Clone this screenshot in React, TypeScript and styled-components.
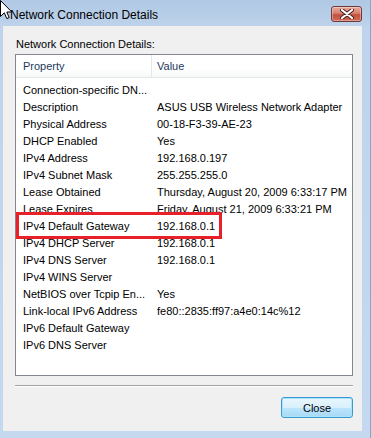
import styled, { createGlobalStyle } from 'styled-components'

const rows: [string, string][] = [
    ['Connection-specific DN...', ''],
    ['Description', 'ASUS USB Wireless Network Adapter'],
    ['Physical Address', '00-18-F3-39-AE-23'],
    ['DHCP Enabled', 'Yes'],
    ['IPv4 Address', '192.168.0.197'],
    ['IPv4 Subnet Mask', '255.255.255.0'],
    ['Lease Obtained', 'Thursday, August 20, 2009 6:33:17 PM'],
    ['Lease Expires', 'Friday, August 21, 2009 6:33:21 PM'],
    ['IPv4 Default Gateway', '192.168.0.1'],
    ['IPv4 DHCP Server', '192.168.0.1'],
    ['IPv4 DNS Server', '192.168.0.1'],
    ['IPv4 WINS Server', ''],
    ['NetBIOS over Tcpip En...', 'Yes'],
    ['Link-local IPv6 Address', 'fe80::2835:ff97:a4e0:14c%12'],
    ['IPv6 Default Gateway', ''],
    ['IPv6 DNS Server', ''],
]

const HIGHLIGHT = 'IPv4 Default Gateway'

const App = () => {
    return (
        <>
            <GlobalStyle />
            <StyledWindow>
                <Cursor width="13" height="20" viewBox="0 0 13 20">
                    <path d="M0.5 0.5 L0.5 16.5 L4.3 12.8 L6.8 18.6 L9.2 17.6 L6.8 12 L11.8 12 Z" fill="#fff" stroke="#000" strokeWidth="1" strokeLinejoin="round" />
                </Cursor>
                <TitleBar>
                    <TitleText>Network Connection Details</TitleText>
                    <CloseX aria-label="close">
                        <svg width="14" height="10" viewBox="0 0 14 10">
                            <path d="M2 1 L12 9 M12 1 L2 9" stroke="#4a2020" strokeWidth="4" strokeLinecap="round" />
                            <path d="M2 1 L12 9 M12 1 L2 9" stroke="#fff" strokeWidth="2.2" strokeLinecap="round" />
                        </svg>
                    </CloseX>
                </TitleBar>
                <Client>
                    <Label>Network Connection Details:</Label>
                    <ListBox>
                        <HeaderRow>
                            <HeaderCell $first>Property</HeaderCell>
                            <HeaderCell>Value</HeaderCell>
                        </HeaderRow>
                        <Rows>
                            {rows.map(([prop, val]) => (
                                <Row key={prop}>
                                    <Cell $first>{prop}</Cell>
                                    <Cell>{val}</Cell>
                                    {prop === HIGHLIGHT && <Highlight />}
                                </Row>
                            ))}
                        </Rows>
                    </ListBox>
                    <Separator />
                    <Footer>
                        <Button>Close</Button>
                    </Footer>
                </Client>
            </StyledWindow>
        </>
    )
}

export default App

const GlobalStyle = createGlobalStyle`
html, body { margin: 0; padding: 0; }
body {
  font-family: "Liberation Sans", Arial, sans-serif;
  font-size: 11px;
  color: #000;
  background: #c2d7ee;
}
`

const StyledWindow = styled.div`
position: relative;
width: 371px;
height: 438px;
display: flex;
flex-direction: column;
box-sizing: border-box;
padding: 0 8px 7px 3px;
background: linear-gradient(#b0c8e4 0px, #bfd4ec 30px, #c4d8ef 100%);
border-right: 1px solid #7fa9d0;
overflow: hidden;
`

const Cursor = styled.svg`
position: absolute;
left: 0;
top: 0;
z-index: 5;
`

const TitleBar = styled.div`
height: 26px;
display: flex;
align-items: flex-start;
justify-content: space-between;
padding-left: 7px;
`

const TitleText = styled.span`
font-size: 12px;
line-height: 14px;
margin-top: 8px;
color: #000;
`

const CloseX = styled.div`
width: 31px;
height: 16px;
margin-top: 6px;
box-sizing: border-box;
border: 1px solid #6b3a3a;
border-radius: 3px;
background: linear-gradient(#e9a99c 0%, #d7806f 45%, #c4503f 55%, #cf6a55 100%);
box-shadow: inset 0 0 0 1px rgba(255, 255, 255, 0.35);
display: flex;
align-items: center;
justify-content: center;
`

const Client = styled.div`
flex: 1;
background: #f0f0f0;
display: flex;
flex-direction: column;
padding: 11px 9px 0 12px;
`

const Label = styled.div`
line-height: 14px;
padding-left: 1px;
margin-bottom: 3px;
`

const ListBox = styled.div`
height: 322px;
box-sizing: border-box;
background: #fff;
border: 1px solid #828790;
display: flex;
flex-direction: column;
`

const HeaderRow = styled.div`
display: grid;
grid-template-columns: 136px 1fr;
height: 22px;
border-bottom: 1px solid #e5e5e5;
background: linear-gradient(#ffffff, #ffffff 60%, #f7f8f9);
`

const HeaderCell = styled.div<{ $first?: boolean }>`
display: flex;
align-items: center;
padding-left: ${({ $first }) => ($first ? '7px' : '5px')};
border-right: ${({ $first }) => ($first ? '1px solid #e3e6ea' : 'none')};
color: #1e395b;
`

const Rows = styled.div`
padding-top: 3px;
display: flex;
flex-direction: column;
`

const Row = styled.div`
position: relative;
display: grid;
grid-template-columns: 136px 1fr;
height: 17px;
align-items: center;
`

const Cell = styled.div<{ $first?: boolean }>`
padding-left: ${({ $first }) => ($first ? '7px' : '5px')};
white-space: nowrap;
overflow: hidden;
`

const Highlight = styled.div`
position: absolute;
left: 0;
top: -5px;
width: 206px;
height: 27px;
box-sizing: border-box;
border: 3px solid #e8202a;
pointer-events: none;
`

const Separator = styled.div`
margin-top: 9px;
height: 0;
border-top: 1px solid #a0a0a0;
border-bottom: 1px solid #ffffff;
`

const Footer = styled.div`
display: flex;
justify-content: flex-end;
padding-top: 10px;
`

const Button = styled.button`
width: 72px;
height: 21px;
box-sizing: border-box;
border: 1px solid #3c9ad0;
border-radius: 3px;
background: linear-gradient(#eaf6fd 0%, #d9f0fc 50%, #bee6fd 50%, #a7d9f5 100%);
box-shadow: inset 0 0 0 1px #a6e4ff;
font-family: "Liberation Sans", Arial, sans-serif;
font-size: 11px;
color: #000;
padding: 0;
`
